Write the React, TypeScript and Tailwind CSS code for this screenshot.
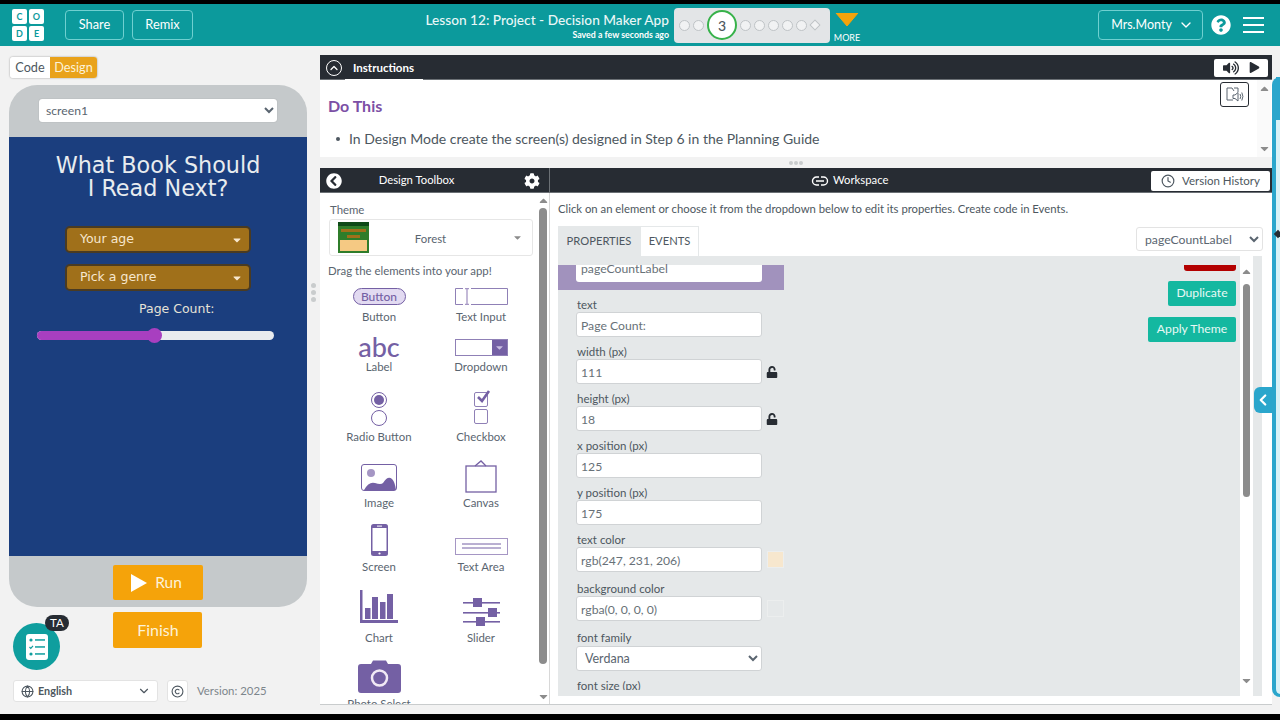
import React from "react";
import { ChevronDown, ChevronUp, Globe, Copyright, Clock, ChevronLeft } from "lucide-react";
import { FaUnlock, FaCog, FaVolumeUp, FaPlay, FaChevronCircleLeft, FaQuestionCircle, FaCaretDown, FaCaretUp } from "react-icons/fa";

const P = "#7460a4";

function Logo() {
  return (
    <div className="grid grid-cols-2 gap-[2px] w-[32px] h-[32px]">
      {["C", "O", "D", "E"].map((c) => (
        <div key={c} className="bg-white rounded-[2px] flex items-center justify-center text-[9px] font-bold text-[#0c9a9c] leading-none">{c}</div>
      ))}
    </div>
  );
}

function Dot() {
  return <div className="w-[11px] h-[11px] rounded-full bg-[#f1f2f3] border border-[#bfc3c6]" />;
}

function Progress() {
  return (
    <div className="ml-[5px] w-[156px] h-[35px] bg-[#e3e5e7] rounded-[4px] flex items-center pl-[5px] gap-[3px]">
      <Dot />
      <Dot />
      <div className="w-[30px] h-[30px] rounded-full bg-white border-[2px] border-[#37b24a] flex items-center justify-center text-[14px] font-medium text-[#4d5760]">3</div>
      <Dot />
      <Dot />
      <Dot />
      <Dot />
      <Dot />
      <div className="ml-[1px] w-[8px] h-[8px] rotate-45 bg-[#f1f2f3] border border-[#bfc3c6]" />
    </div>
  );
}

function Header() {
  return (
    <div className="h-[42px] bg-[#0c9a9c] flex items-center text-white pl-[12px] shrink-0">
      <Logo />
      <div className="ml-[21px] w-[59px] h-[30px] border border-[#6fd0d0] rounded-[4px] flex items-center justify-center text-[12.8px]">Share</div>
      <div className="ml-[8px] w-[61px] h-[30px] border border-[#6fd0d0] rounded-[4px] flex items-center justify-center text-[12.8px]">Remix</div>
      <div className="w-[476px] flex flex-col items-end">
        <div className="text-[13.7px] leading-[18px] text-[#e9f7f7] font-medium">Lesson 12: Project - Decision Maker App</div>
        <div className="text-[8.8px] leading-[11px] font-bold">Saved a few seconds ago</div>
      </div>
      <Progress />
      <div className="ml-[5px] w-[24px] flex flex-col items-center self-start pt-[9px]">
        <svg width="24" height="14" viewBox="0 0 24 14"><path d="M1 0 H23 L12 13 Z" fill="#f5a30a" stroke="#f5a30a" strokeLinejoin="round" /></svg>
        <div className="text-[9px] leading-[10px] mt-[6px]">MORE</div>
      </div>
      <div className="ml-[239px] w-[105px] h-[30px] border border-[#6fd0d0] rounded-[4px] flex items-center justify-center gap-[6px] text-[12.5px] pl-[4px]">
        Mrs.Monty <ChevronDown size={16} strokeWidth={2} />
      </div>
      <FaQuestionCircle size={20} className="ml-[8px]" color="#fff" />
      <div className="ml-[12px] w-[21px] flex flex-col gap-[5px]">
        <div className="h-[2px] bg-white" />
        <div className="h-[2px] bg-white" />
        <div className="h-[2px] bg-white" />
      </div>
    </div>
  );
}

function PhoneDrop({ label, mt }: { label: string; mt: string }) {
  return (
    <div className={`${mt} ml-[56px] w-[186px] h-[27px] bg-[#a0701a] border-[2px] border-[#4a3b22] rounded-[5px] flex items-center justify-between pl-[13px] pr-[6px] text-[12.5px] text-[#f7e7ce]`}>
      {label}
      <FaCaretDown size={12} color="#f7e7ce" />
    </div>
  );
}

function LeftColumn() {
  return (
    <div className="w-[320px] shrink-0 relative pl-[9px] pt-[11px]">
      <div className="flex ml-[1px] w-[87px] h-[21px] text-[12.7px] rounded-[3px] shadow-[0_0_2px_rgba(0,0,0,0.4)]">
        <div className="w-[40px] bg-white rounded-l-[3px] flex items-center justify-center text-[#4d5760]">Code</div>
        <div className="w-[47px] bg-[#e9a21b] rounded-r-[3px] flex items-center justify-center text-[#fdf2d8]">Design</div>
      </div>
      <div className="mt-[7px] w-[298px] h-[522px] bg-[#c5c9cb] rounded-[28px] flex flex-col overflow-hidden">
        <div className="h-[52px] pl-[30px] pt-[14px] shrink-0">
          <select className="block w-[238px] h-[23px] bg-white rounded-[3px] text-[12.2px] text-[#5a6570] pl-[3px] shadow-[0_0_1px_rgba(0,0,0,0.3)]"><option>screen1</option></select>
        </div>
        <div className="h-[419px] bg-[#1b3e7e] shrink-0 font-['DejaVu_Sans',sans-serif]">
          <div className="pt-[17px] text-center text-[22.3px] leading-[23px] text-[#e8ecef]">What Book Should<br />I Read Next?</div>
          <PhoneDrop label="Your age" mt="mt-[26px]" />
          <PhoneDrop label="Pick a genre" mt="mt-[11px]" />
          <div className="mt-[9px] ml-[130px] text-[12.5px] leading-[18px] text-[#e6e2d6]">Page Count:</div>
          <div className="mt-[13px] ml-[28px] w-[237px] h-[9px] rounded-full bg-[#e9ebee] relative">
            <div className="w-[117px] h-[9px] rounded-l-full bg-[#a83fc0]" />
            <div className="absolute left-[110px] top-[-3px] w-[15px] h-[15px] rounded-full bg-[#a83fc0]" />
          </div>
        </div>
        <div className="pt-[9px] flex justify-center">
          <div className="w-[90px] h-[35px] bg-[#f5a30a] rounded-[2px] flex items-center justify-center gap-[8px] text-[15.5px] text-[#fdf2d8] pr-[3px]">
            <svg width="16" height="18" viewBox="0 0 16 18"><path d="M0 0 L16 9 L0 18 Z" fill="#fff" /></svg>
            Run
          </div>
        </div>
      </div>
      <div className="mt-[5px] ml-[104px] w-[89px] h-[36px] bg-[#f5a30a] rounded-[2px] flex items-center justify-center text-[16px] text-[#fdf2d8] pl-[1px]">Finish</div>
      <div className="mt-[32px] ml-[4px] flex items-center">
        <div className="w-[145px] h-[22px] bg-white border border-[#e3e3e3] rounded-[3px] flex items-center pl-[7px] pr-[6px] text-[10.8px] font-bold text-[#4d5760]">
          <Globe size={13} className="mr-[4px]" />
          English
          <ChevronDown size={14} className="ml-auto" />
        </div>
        <div className="ml-[9px] w-[21px] h-[22px] bg-white border border-[#e3e3e3] rounded-[3px] flex items-center justify-center text-[#4d5760]"><Copyright size={13} /></div>
        <div className="ml-[9px] text-[11.4px] text-[#7d868c]">Version: 2025</div>
      </div>
      <div className="absolute left-[13px] top-[577px] w-[47px] h-[47px] rounded-full bg-[#0f9e9e] flex items-center justify-center">
        <svg width="22" height="26" viewBox="0 0 22 26">
          <rect width="22" height="26" rx="3" fill="#fff" />
          <g fill="#0f9e9e">
            <circle cx="5" cy="6" r="1.6" />
            <path d="M3.5 13 L4.8 14.4 L7 11.8" stroke="#0f9e9e" strokeWidth="1.2" fill="none" />
            <circle cx="5" cy="20" r="1.6" />
            <rect x="9" y="5.2" width="10" height="1.5" />
            <rect x="9" y="12.2" width="10" height="1.5" />
            <rect x="9" y="19.2" width="10" height="1.5" />
          </g>
        </svg>
      </div>
      <div className="absolute left-[45px] top-[569px] w-[24px] h-[16px] rounded-full bg-[#272c33] flex items-center justify-center text-[11.5px] text-white">TA</div>
      <div className="absolute left-[311px] top-[237px] flex flex-col gap-[2px]">
        <div className="w-[5px] h-[5px] rounded-full bg-[#c9cccd]" />
        <div className="w-[5px] h-[5px] rounded-full bg-[#c9cccd]" />
        <div className="w-[5px] h-[5px] rounded-full bg-[#c9cccd]" />
      </div>
    </div>
  );
}

function Instructions() {
  return (
    <div className="shrink-0 relative">
      <div className="h-[25px] bg-[#272c33] flex items-center text-white border-b border-[#6b7075] pt-[1px]">
        <div className="ml-[6px] w-[16px] h-[16px] rounded-full border-[1.5px] border-white flex items-center justify-center"><ChevronUp size={12} strokeWidth={2.5} /></div>
        <div className="ml-[11px] text-[11.5px] font-bold relative h-full flex items-center">
          Instructions
          <div className="absolute left-[-8px] right-[-9px] bottom-[-1px] h-[1px] bg-white" />
        </div>
        <div className="ml-auto mr-[4px] w-[54px] h-[18px] bg-white rounded-[2px] flex items-center justify-center gap-[10px] text-[#272c33]">
          <FaVolumeUp size={16} />
          <FaPlay size={11} />
        </div>
      </div>
      <div className="h-[77px] bg-white flex">
        <div className="flex-1 pl-[8px] pt-[15px]">
          <div className="text-[16px] leading-[22px] font-bold text-[#7c4fa5]">Do This</div>
          <div className="mt-[12px] flex items-center text-[14px] leading-[20px] text-[#4d5760]">
            <div className="ml-[8px] w-[4px] h-[4px] rounded-full bg-[#4d5760] mr-[9px]" />
            In Design Mode create the screen(s) designed in Step 6 in the Planning Guide
          </div>
        </div>
        <div className="w-[14px] mr-[1px] bg-[#fafafa] flex flex-col justify-between items-center py-[2px] text-[#8c8c8c]">
          <FaCaretUp size={13} />
          <FaCaretDown size={13} />
        </div>
      </div>
      <div className="absolute left-[900px] top-[27px] w-[29px] h-[25px] bg-white border-[1.5px] border-[#272c33] rounded-[3px] flex items-center justify-center">
        <svg width="18" height="16" viewBox="0 0 18 16" fill="none" stroke="#5a6570" strokeWidth="1">
          <path d="M7 13 H1 V1 H6 L8 4 M8 1 H12 V5" />
          <path d="M7 8 H9 L12 5.5 V14 L9 11.5 H7 Z" />
          <path d="M14 7 Q15.5 9.5 14 12 M15.8 5.5 Q18 9.5 15.8 13.5" />
        </svg>
      </div>
      <div className="h-[11px] bg-[#f2f2f2] flex justify-center items-center gap-[1px]">
        <div className="w-[4px] h-[4px] rounded-full bg-[#c9cccd]" />
        <div className="w-[4px] h-[4px] rounded-full bg-[#c9cccd]" />
        <div className="w-[4px] h-[4px] rounded-full bg-[#c9cccd]" />
      </div>
    </div>
  );
}

function ImageIcon() {
  return (
    <svg width="36" height="27" viewBox="0 0 36 27">
      <rect x="0.5" y="0.5" width="35" height="26" rx="2.5" fill="#fff" stroke={P} />
      <circle cx="10" cy="9" r="4" fill="#a596c4" />
      <path d="M3 26 Q8 17 14 19 T22 19 Q27 11 31 15 Q34 18 35 26 Z" fill={P} />
    </svg>
  );
}
function CanvasIcon() {
  return (
    <svg width="32" height="33" viewBox="0 0 32 33" fill="none" stroke={P}>
      <rect x="1" y="6" width="30" height="26" strokeWidth="1.3" />
      <path d="M10 6 L16 1 L21 6" strokeWidth="1.3" />
    </svg>
  );
}
function ScreenIcon() {
  return (
    <svg width="17" height="32" viewBox="0 0 17 32">
      <rect width="17" height="32" rx="2.5" fill={P} />
      <rect x="1.5" y="4" width="14" height="23" fill="#fff" />
      <rect x="6" y="1.6" width="5" height="1" fill="#fff" />
      <circle cx="8.5" cy="29.5" r="1.1" fill="#fff" />
    </svg>
  );
}
function TextAreaIcon() {
  return (
    <svg width="53" height="17" viewBox="0 0 53 17" fill="none" stroke="#a596c4">
      <rect x="0.5" y="0.5" width="52" height="16" strokeWidth="1" />
      <path d="M7 6 H46 M7 10 H46" stroke={P} />
    </svg>
  );
}
function ChartIcon() {
  return (
    <svg width="38" height="33" viewBox="0 0 38 33" fill={P}>
      <rect x="0" y="0" width="2.5" height="33" />
      <rect x="0" y="30" width="38" height="3" />
      <rect x="5" y="18" width="5.5" height="11" />
      <rect x="12" y="7" width="6" height="22" />
      <rect x="20" y="12" width="5.5" height="17" />
      <rect x="27" y="4" width="6" height="25" />
    </svg>
  );
}
function SliderIcon() {
  return (
    <svg width="37" height="28" viewBox="0 0 37 28" fill={P}>
      <rect x="0" y="4" width="37" height="1.6" />
      <rect x="0" y="14" width="37" height="1.6" />
      <rect x="0" y="23" width="37" height="1.6" />
      <rect x="10" y="0" width="9" height="9" />
      <rect x="25" y="10" width="9" height="9" />
      <rect x="13" y="19" width="9" height="9" />
    </svg>
  );
}
function CameraIcon() {
  return (
    <svg width="43" height="33" viewBox="0 0 43 33">
      <path d="M3 4 H13 L15 0.5 H28 L30 4 H40 Q43 4 43 7 V30 Q43 33 40 33 H3 Q0 33 0 30 V7 Q0 4 3 4 Z" fill={P} />
      <circle cx="21.5" cy="18" r="7.5" fill="none" stroke="#f1e9f5" strokeWidth="2.5" />
    </svg>
  );
}
function TextInputIcon() {
  return (
    <svg width="53" height="17" viewBox="0 0 53 17" fill="none" stroke="#8f80b6">
      <path d="M8 0.5 H0.5 V16.5 H8 M16 0.5 H52.5 V16.5 H16" />
      <path d="M10 0.5 H14 M12 0.5 V16.5 M10 16.5 H14" stroke="#a596c4" strokeWidth="1.3" />
    </svg>
  );
}

function Toolbox() {
  const L = "text-[11.4px] leading-[16px] text-[#5a6570]";
  const items: [React.ReactNode, string, string][] = [
    [<div className="w-[53px] h-[17px] rounded-full bg-[#e2daf1] border border-[#7460a4] flex items-center justify-center text-[12px] text-[#7460a4] font-medium">Button</div>, "Button", "h-[22px] pt-[1px]"],
    [<TextInputIcon />, "Text Input", "h-[22px] pt-[1px]"],
    [<div className="text-[27px] leading-[20px] text-[#7460a4] h-[20px] font-medium">abc</div>, "Label", "h-[22px]"],
    [<div className="w-[53px] h-[17px] border border-[#8f80b6] flex justify-end"><div className="w-[15px] bg-[#7460a4] flex items-center justify-center"><FaCaretDown size={11} color="#c8bde0" /></div></div>, "Dropdown", "h-[20px] mt-[2px]"],
    [<div className="flex flex-col items-center gap-[2px]">
      <div className="w-[16px] h-[16px] rounded-full border border-[#7460a4] flex items-center justify-center"><div className="w-[10px] h-[10px] rounded-full bg-[#7460a4]" /></div>
      <div className="w-[16px] h-[16px] rounded-full border border-[#7460a4]" />
    </div>, "Radio Button", "h-[37px]"],
    [<div className="flex flex-col items-center gap-[2px] relative">
      <div className="w-[14px] h-[15px] rounded-[2px] border border-[#8f80b6]" />
      <svg className="absolute left-[2px] top-[-2px]" width="15" height="14" viewBox="0 0 15 14"><path d="M2 7 L6 11 L13 1" stroke="#7460a4" strokeWidth="2.6" fill="none" /></svg>
      <div className="w-[14px] h-[15px] rounded-[2px] border border-[#8f80b6]" />
    </div>, "Checkbox", "h-[37px]"],
    [<ImageIcon />, "Image", "h-[35px] pt-[4px]"],
    [<CanvasIcon />, "Canvas", "h-[35px]"],
    [<ScreenIcon />, "Screen", "h-[36px] pt-[1px]"],
    [<TextAreaIcon />, "Text Area", "h-[36px] pt-[15px]"],
    [<ChartIcon />, "Chart", "h-[42px] pt-[2px]"],
    [<SliderIcon />, "Slider", "h-[42px] pt-[10px]"],
    [<CameraIcon />, "Photo Select", "h-[37px] pt-[1px]"],
  ];
  return (
    <div className="w-[230px] shrink-0 bg-white flex border-r border-[#d8d8d8] h-full">
      <div className="flex-1 relative overflow-hidden pl-[8px]">
        <div className="pl-[2px] pt-[9px] text-[11.4px] leading-[16px] text-[#5a6570]">Theme</div>
        <div className="mt-[1px] ml-[1px] w-[204px] h-[37px] border border-[#e6e6e6] rounded-[3px] flex items-center pl-[8px] pr-[9px]">
          <svg width="31" height="31" viewBox="0 0 31 31" className="shrink-0">
            <rect width="31" height="31" fill="#2f7d2a" />
            <rect width="31" height="4" fill="#0f4a18" />
            <rect x="3" y="7" width="25" height="3" fill="#a0701a" />
            <rect x="9" y="13" width="13" height="3" fill="#a0701a" />
            <rect x="2" y="18" width="27" height="11" fill="#f5c983" />
          </svg>
          <div className="flex-1 text-center text-[11.4px] text-[#5a6570] pr-[20px] pt-[2px]">Forest</div>
          <FaCaretDown size={11} color="#8c8c8c" />
        </div>
        <div className="mt-[7px] text-[11.4px] leading-[16px] text-[#5a6570]">Drag the elements into your app!</div>
        <div className="mt-[8px] grid grid-cols-[102px_102px] grid-rows-[50px_55px_68px_63px_65px_71px_60px]">
          {items.map(([icon, name, box]) => (
            <div key={name} className="flex flex-col items-center">
              <div className={`${box} flex items-start justify-center shrink-0`}>{icon}</div>
              <div className={L}>{name}</div>
            </div>
          ))}
        </div>
      </div>
      <div className="w-[12px] shrink-0 flex flex-col items-center text-[#8c8c8c] pt-[1px] pb-[1px]">
        <FaCaretUp size={13} />
        <div className="mt-[1px] w-[8px] h-[456px] rounded-full bg-[#8c8c8c]" />
        <FaCaretDown size={13} className="mt-auto" />
      </div>
    </div>
  );
}

const LBL = "pl-[1px] text-[11.5px] leading-[15px] text-[#4d5760]";

function Field({ label, value, mb, after }: { label: string; value: string; mb: string; after?: React.ReactNode }) {
  return (
    <div className={mb}>
      <div className={LBL}>{label}</div>
      <div className="flex items-center">
        <input readOnly value={value} className="w-[186px] h-[25px] bg-white rounded-[3px] border border-[#d0d3d5] pl-[4px] pt-[1px] text-[12.2px] text-[#687178]" />
        {after}
      </div>
    </div>
  );
}

function Swatch({ color }: { color: string }) {
  return <div className="ml-[5px] w-[17px] h-[17px] shrink-0 border border-[#eceeee]" style={{ backgroundColor: color }} />;
}

function Workspace() {
  return (
    <div className="w-[722px] bg-white h-full flex flex-col">
      <div className="h-[31px] pl-[8px] flex items-center text-[11.3px] text-[#4d5760] shrink-0 pt-[1px]">
        Click on an element or choose it from the dropdown below to edit its properties. Create code in Events.
      </div>
      <div className="pl-[8px] pr-[9px] flex items-end h-[32px] shrink-0">
        <div className="w-[82px] h-[30px] bg-[#e5e8e9] flex items-center justify-center text-[11.2px] text-[#4d5760]">PROPERTIES</div>
        <div className="w-[59px] h-[30px] bg-white border border-b-0 border-[#e5e8e9] flex items-center justify-center text-[11.2px] text-[#4d5760]">EVENTS</div>
        <select className="ml-auto mb-[5px] w-[127px] h-[24px] bg-white border border-[#e3e3e3] rounded-[3px] pl-[4px] text-[12.2px] text-[#5a6570]"><option>pageCountLabel</option></select>
      </div>
      <div className="ml-[8px] w-[704px] h-[440px] bg-[#e5e8e9] flex overflow-hidden">
        <div className="w-[226px] h-[434px] overflow-hidden shrink-0">
          <div className="mt-[9px] h-[25px] bg-[#a192bd] pl-[18px]">
            <div className="w-[186px] h-[17px] bg-white rounded-b-[3px] pl-[5px] text-[12.2px] leading-[8px] text-[#687178]">pageCountLabel</div>
          </div>
          <div className="pl-[18px] pt-[7px]">
            <Field label="text" value="Page Count:" mb="mb-[7px]" />
            <Field label="width (px)" value="111" mb="mb-[7px]" after={<FaUnlock size={12} className="ml-[4px] text-[#272c33]" />} />
            <Field label="height (px)" value="18" mb="mb-[7px]" after={<FaUnlock size={12} className="ml-[4px] text-[#272c33]" />} />
            <Field label="x position (px)" value="125" mb="mb-[7px]" />
            <Field label="y position (px)" value="175" mb="mb-[7px]" />
            <Field label="text color" value="rgb(247, 231, 206)" mb="mb-[9px]" after={<Swatch color="#f7e7ce" />} />
            <Field label="background color" value="rgba(0, 0, 0, 0)" mb="mb-[9px]" after={<Swatch color="transparent" />} />
            <div className={LBL}>font family</div>
            <select className="w-[186px] h-[25px] bg-white rounded-[3px] border border-[#d0d3d5] pl-[4px] text-[12.5px] text-[#5a6570]"><option>Verdana</option></select>
            <div className={`mt-[7px] ${LBL}`}>font size (px)</div>
          </div>
        </div>
        <div className="flex-1 flex flex-col items-end pr-[4px]">
          <div className="mt-[9px] w-[52px] h-[6px] bg-[#b30000] rounded-b-[3px]" />
          <div className="mt-[10px] w-[68px] h-[25px] bg-[#14b8a0] rounded-[2px] flex items-center justify-center text-[12.2px] text-[#e8f8f5]">Duplicate</div>
          <div className="mt-[11px] w-[88px] h-[25px] bg-[#14b8a0] rounded-[2px] flex items-center justify-center text-[12.2px] text-[#e8f8f5]">Apply Theme</div>
        </div>
        <div className="w-[13px] shrink-0 mr-[9px] bg-white flex flex-col items-center text-[#8c8c8c] pt-[9px] pb-[9px]">
          <FaCaretUp size={13} />
          <div className="mt-[6px] w-[7px] h-[213px] rounded-full bg-[#8c8c8c]" />
          <FaCaretDown size={13} className="mt-auto" />
        </div>
      </div>
    </div>
  );
}

function RightColumn() {
  return (
    <div className="w-[952px] shrink-0 pt-[9px] flex flex-col">
      <Instructions />
      <div className="h-[25px] bg-[#272c33] flex text-white border-b border-[#6b7075] shrink-0">
        <div className="w-[230px] border-r border-[#6b7075] flex items-center pl-[6px] pr-[9px] pt-[1px]">
          <FaChevronCircleLeft size={16} />
          <div className="flex-1 text-center text-[11.3px] pr-[33px]">Design Toolbox</div>
          <FaCog size={16} />
        </div>
        <div className="flex-1 flex items-center relative pt-[1px]">
          <div className="ml-[261px] flex items-center gap-[4px] text-[11.3px]">
            <svg width="18" height="12" viewBox="0 0 18 12" fill="none" stroke="#fff" strokeWidth="1.4">
              <path d="M8 2 H5.5 A4 4 0 0 0 5.5 10 H8 M10 2 H12.5 A4 4 0 0 1 12.5 10 H10 M5 6 H13" />
            </svg>
            Workspace
          </div>
          <div className="ml-auto mr-[2px] w-[119px] h-[20px] bg-white rounded-[2px] flex items-center justify-center gap-[7px] text-[11.5px] text-[#4d5760]">
            <Clock size={14} />
            Version History
          </div>
        </div>
      </div>
      <div className="h-[512px] flex border-b border-[#c9cccd] shrink-0">
        <Toolbox />
        <Workspace />
      </div>
    </div>
  );
}

function Sliver() {
  return (
    <div className="w-[8px] shrink-0 mt-[31px] h-[620px] border-l-[4px] border-y-[3px] border-[#2ba6cc] rounded-l-[8px] bg-[#d9f2f7] flex flex-col relative">
      <div className="h-[43px] bg-[#2ba6cc] -mt-[3px] shrink-0" />
      <div className="absolute left-[-1px] top-[151px] w-[6px] h-[6px] rotate-45 bg-[#272c33]" />
      <div className="absolute left-[-22px] top-[307px] w-[18px] h-[26px] bg-[#2ba6cc] rounded-l-[6px] flex items-center justify-center text-white">
        <ChevronLeft size={20} strokeWidth={3} />
      </div>
    </div>
  );
}

export default function App() {
  return (
    <div className="w-[1280px] h-[720px] overflow-hidden flex flex-col bg-[#f2f2f2] font-['Lato',sans-serif]">
      <div className="h-[4px] bg-black shrink-0" />
      <Header />
      <div className="flex-1 flex min-h-0">
        <LeftColumn />
        <RightColumn />
        <Sliver />
      </div>
      <div className="h-[6px] bg-black shrink-0" />
    </div>
  );
}
